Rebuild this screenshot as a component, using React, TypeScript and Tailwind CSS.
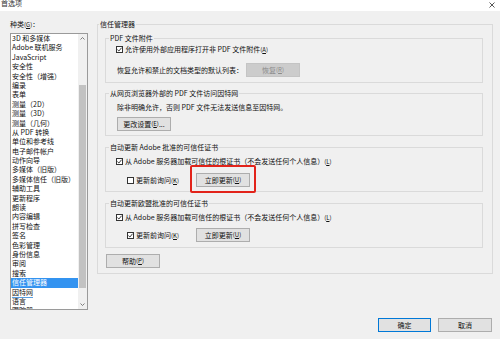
import React from "react";

const categories = [
  "3D 和多媒体",
  "Adobe 联机服务",
  "JavaScript",
  "安全性",
  "安全性（增强）",
  "编录",
  "表单",
  "测量（2D）",
  "测量（3D）",
  "测量（几何）",
  "从 PDF 转换",
  "单位和参考线",
  "电子邮件帐户",
  "动作向导",
  "多媒体（旧版）",
  "多媒体信任（旧版）",
  "辅助工具",
  "更新程序",
  "朗读",
  "内容编辑",
  "拼写检查",
  "签名",
  "色彩管理",
  "身份信息",
  "审阅",
  "搜索",
  "信任管理器",
  "因特网",
  "语言",
  "跟踪器",
];

function CheckBox({ checked }: { checked: boolean }) {
  return (
    <span className="flex h-[7px] w-[7px] shrink-0 items-center justify-center border border-[#333333] bg-white">
      {checked && (
        <svg width="5" height="5" viewBox="0 0 5 5">
          <path d="M0.4 2.6 L1.9 4 L4.6 0.7" stroke="#222" strokeWidth="0.9" fill="none" />
        </svg>
      )}
    </span>
  );
}

function Btn({
  children,
  disabled = false,
  primary = false,
  width = "w-[54px]",
}: {
  children: React.ReactNode;
  disabled?: boolean;
  primary?: boolean;
  width?: string;
}) {
  let cls = "border-[#adadad] bg-[#e1e1e1] text-[#111]";
  if (disabled) cls = "border-[#c4c4c4] bg-[#cccccc] text-[#8a8a8a]";
  if (primary) cls = "border-[#0078d7] bg-[#e1e1e1] text-[#111]";
  return (
    <div className={`flex h-[14px] ${width} shrink-0 items-center justify-center border ${cls} text-[7px] leading-none`}>
      {children}
    </div>
  );
}

function Key({ k }: { k: string }) {
  return (
    <span className="text-[6px]">
      (<span className="underline">{k}</span>)
    </span>
  );
}

export default function App() {
  return (
    <div className="flex h-[339px] w-[500px] flex-col overflow-hidden bg-[#f0f0f0] font-['Noto_Sans_CJK_SC','Noto_Sans',sans-serif] text-[7px] text-[#111]">
      {/* title bar */}
      <div className="flex h-[11px] shrink-0 items-start justify-between bg-white">
        <span className="-mt-[2px] ml-[1px] leading-[10px] text-[#333]">首选项</span>
        <svg className="mr-[5px] mt-[2px]" width="6" height="6" viewBox="0 0 6 6">
          <path d="M0.5 0.5 L5.5 5.5 M5.5 0.5 L0.5 5.5" stroke="#444" strokeWidth="0.9" />
        </svg>
      </div>

      <div className="flex items-start">
        {/* categories */}
        <div className="ml-[10px] flex w-[78px] flex-col pt-[8px]">
          <div className="h-[11px] leading-[11px]">
            种类<Key k="G" />：
          </div>
          <div className="mt-[3px] flex h-[277px] border border-[#9a9a9a] bg-white">
            <div className="flex-1 overflow-hidden">
              {categories.map((c) => (
                <div
                  key={c}
                  className={`h-[9.4px] whitespace-nowrap pl-[1px] leading-[9.4px] ${
                    c === "信任管理器" ? "bg-[#3393f0] text-white" : ""
                  }`}
                >
                  {c === "因特网" ? <span className="border-b border-[#5a9fe0]">{c}</span> : c}
                </div>
              ))}
            </div>
            <div className="flex w-[9px] flex-col bg-[#f0f0f0]">
              <div className="flex h-[9px] items-center justify-center">
                <svg width="5" height="3" viewBox="0 0 5 3">
                  <path d="M0.5 2.5 L2.5 0.5 L4.5 2.5" stroke="#606060" strokeWidth="0.8" fill="none" />
                </svg>
              </div>
              <div className="flex-1 px-[1px]">
                <div className="mt-[42px] h-[203px] bg-[#c2c2c2]" />
              </div>
              <div className="flex h-[9px] items-center justify-center">
                <svg width="5" height="3" viewBox="0 0 5 3">
                  <path d="M0.5 0.5 L2.5 2.5 L4.5 0.5" stroke="#606060" strokeWidth="0.8" fill="none" />
                </svg>
              </div>
            </div>
          </div>
        </div>

        {/* trust manager */}
        <div className="ml-[9px] w-[396px] pt-[8px]">
          <fieldset className="border border-[#dadada] pb-[5px]">
            <legend className="ml-[1px] px-[1px] leading-[10px]">信任管理器</legend>

            <fieldset className="ml-[7px] mr-[9px] mt-[4px] border border-[#dadada] pb-[5px]">
              <legend className="ml-[3px] px-[1px] leading-[10px]">PDF 文件附件</legend>
              <div className="pl-[10px]">
                <div className="mt-[1px] flex h-[10px] items-center gap-[2px]">
                  <CheckBox checked />
                  <span>
                    允许使用外部应用程序打开非 PDF 文件附件<Key k="A" />
                  </span>
                </div>
                <div className="mt-[9px] flex items-center pl-[1px]">
                  <span className="w-[129px]">恢复允许和禁止的文档类型的默认列表：</span>
                  <Btn disabled>
                    恢复<Key k="R" />
                  </Btn>
                </div>
              </div>
            </fieldset>

            <fieldset className="ml-[7px] mr-[9px] mt-[5px] border border-[#dadada] pb-[4px]">
              <legend className="ml-[3px] px-[1px] leading-[10px]">从网页浏览器外部的 PDF 文件访问因特网</legend>
              <div className="pl-[11px]">
                <div className="mt-[4px] h-[10px] leading-[10px]">除非明确允许，否则 PDF 文件无法发送信息至因特网。</div>
                <div className="mt-[5px]">
                  <Btn>
                    更改设置<Key k="E" />...
                  </Btn>
                </div>
              </div>
            </fieldset>

            <fieldset className="ml-[7px] mr-[9px] mt-[6px] border border-[#dadada] pb-[4px]">
              <legend className="ml-[3px] px-[1px] leading-[10px]">自动更新 Adobe 批准的可信任证书</legend>
              <div className="pl-[10px]">
                <div className="mt-[4px] flex h-[10px] items-center gap-[2px]">
                  <CheckBox checked />
                  <span>
                    从 Adobe 服务器加载可信任的根证书（不会发送任何个人信息）<Key k="L" />
                  </span>
                </div>
                <div className="mt-[7px] flex items-center pl-[11px]">
                  <div className="flex w-[69px] items-center gap-[2px]">
                    <CheckBox checked={false} />
                    <span>
                      更新前询问<Key k="K" />
                    </span>
                  </div>
                  <div className="relative">
                    <Btn>
                      立即更新<Key k="U" />
                    </Btn>
                    <span className="absolute -bottom-[6px] -left-[6px] -right-[6px] -top-[8px] rounded-[2px] border-2 border-[#e2231a]" />
                  </div>
                </div>
              </div>
            </fieldset>

            <fieldset className="ml-[7px] mr-[9px] mt-[6px] border border-[#dadada] pb-[5px]">
              <legend className="ml-[3px] px-[1px] leading-[10px]">自动更新欧盟批准的可信任证书</legend>
              <div className="pl-[10px]">
                <div className="mt-[4px] flex h-[10px] items-center gap-[2px]">
                  <CheckBox checked />
                  <span>
                    从 Adobe 服务器加载可信任的根证书（不会发送任何个人信息）<Key k="L" />
                  </span>
                </div>
                <div className="mt-[6px] flex items-center pl-[11px]">
                  <div className="flex w-[69px] items-center gap-[2px]">
                    <CheckBox checked />
                    <span>
                      更新前询问<Key k="K" />
                    </span>
                  </div>
                  <Btn>
                    立即更新<Key k="U" />
                  </Btn>
                </div>
              </div>
            </fieldset>

            <div className="ml-[8px] mt-[6px]">
              <Btn>
                帮助<Key k="P" />
              </Btn>
            </div>
          </fieldset>
        </div>
      </div>

      {/* footer */}
      <div className="mt-[8px] flex justify-end gap-[7px] pr-[8px]">
        <Btn primary width="w-[53px]">确定</Btn>
        <Btn>取消</Btn>
      </div>
    </div>
  );
}
